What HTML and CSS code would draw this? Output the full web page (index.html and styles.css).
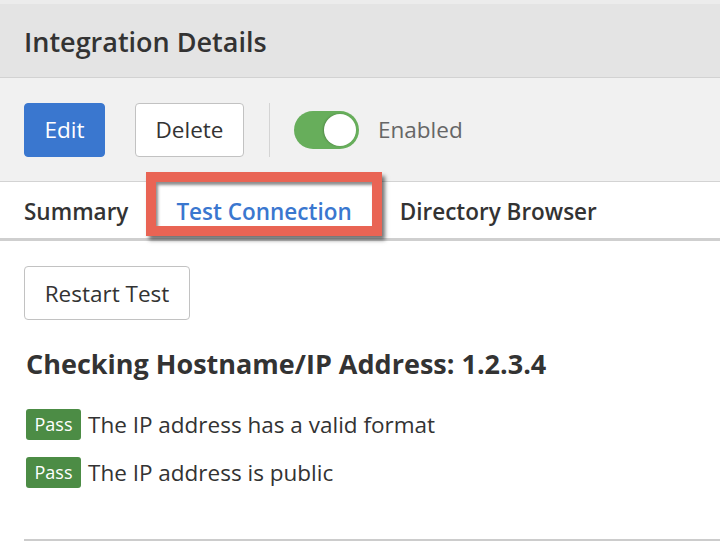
FILE: index.html
```html
<html>
<head>
	<title>Integration Details</title>
	<link rel="stylesheet" href="styles.css">
</head>
<body>
	<div id="page">
		<div id="header">Integration Details</div>
		<div id="toolbar">
			<button class="btn primary">Edit</button>
			<button class="btn danger">Delete</button>
			<div class="divider"></div>
			<div class="toggle on"><div class="knob"></div></div>
			<span class="toggleLabel">Enabled</span>
		</div>
		<div id="tabs">
			<div class="tab">Summary</div>
			<div class="tab active">Test Connection<span class="callout"></span></div>
			<div class="tab">Directory Browser</div>
		</div>
		<div id="content">
			<button class="btn restart">Restart Test</button>
			<h1>Checking Hostname/IP Address: 1.2.3.4</h1>
			<div class="result"><span class="badge">Pass</span>The IP address has a valid format</div>
			<div class="result"><span class="badge">Pass</span>The IP address is public</div>
			<div class="rule"></div>
		</div>
	</div>
</body>
</html>
```
FILE: styles.css
```css
*
{
	font-family: "Open Sans", "Noto Sans", sans-serif;
	box-sizing: border-box;
}
body
{
	margin: 0px;
	background-color: #ffffff;
	color: #333333;
	overflow: hidden;
}
#page
{
	border-top: 4px solid #ececec;
}
#header
{
	height: 74px;
	padding: 0px 24px;
	background-color: #e4e4e4;
	border-bottom: 1px solid #d2d2d2;
	font-size: 27px;
	font-weight: 600;
	line-height: 75px;
	color: #333333;
}
#toolbar
{
	display: flex;
	align-items: center;
	height: 104px;
	padding: 0px 24px;
	background-color: #f1f1f1;
	border-bottom: 1px solid #d3d3d3;
}
.btn
{
	height: 54px;
	padding: 0px;
	font-size: 22.5px;
	color: #333333;
	background-color: #ffffff;
	border: 1px solid #c2c2c2;
	border-radius: 4px;
}
.btn.primary
{
	width: 81px;
	margin-right: 30px;
	color: #ffffff;
	background-color: #3a77cf;
	border-color: #3a77cf;
}
.btn.danger
{
	width: 109px;
}
.divider
{
	width: 1px;
	height: 54px;
	margin: 0px 24px 0px 25px;
	background-color: #d4d4d4;
}
.toggle
{
	position: relative;
	width: 65px;
	height: 38px;
	border-radius: 19px;
	background-color: #67ae5b;
}
.knob
{
	position: absolute;
	top: 3px;
	right: 3px;
	width: 32px;
	height: 32px;
	border-radius: 16px;
	background-color: #ffffff;
	box-shadow: -1px 0px 2px rgba(0, 0, 0, 0.2);
}
.toggleLabel
{
	margin-left: 19px;
	font-size: 22.5px;
	color: #666666;
}
#tabs
{
	display: flex;
	height: 59px;
	border-bottom: 3px solid #cfcfcf;
}
.tab
{
	position: relative;
	padding: 0px 24px;
	font-size: 22.5px;
	font-weight: 600;
	line-height: 60px;
	color: #333333;
}
.tab.active
{
	color: #3a77cf;
}
.callout
{
	position: absolute;
	top: -10px;
	left: -6px;
	right: -6px;
	height: 64px;
	border: 10px solid #e96454;
	box-shadow: 3px 4px 4px rgba(0, 0, 0, 0.55), inset 2px 3px 3px rgba(0, 0, 0, 0.45);
}
#content
{
	padding: 25px 0px 0px 24px;
}
.btn.restart
{
	width: 166px;
}
h1
{
	margin: 25px 0px 27px 2px;
	font-size: 27px;
	font-weight: 700;
	line-height: 37px;
	color: #333333;
}
.result
{
	display: flex;
	align-items: center;
	height: 31px;
	margin: 0px 0px 17px 2px;
	font-size: 22.5px;
	color: #333333;
}
.badge
{
	display: inline-block;
	width: 55px;
	height: 31px;
	margin-right: 7px;
	line-height: 30px;
	text-align: center;
	font-size: 18px;
	color: #ffffff;
	background-color: #4c8c45;
	border-radius: 3px;
}
.rule
{
	margin-top: 51px;
	height: 2px;
	background-color: #cccccc;
}
```
